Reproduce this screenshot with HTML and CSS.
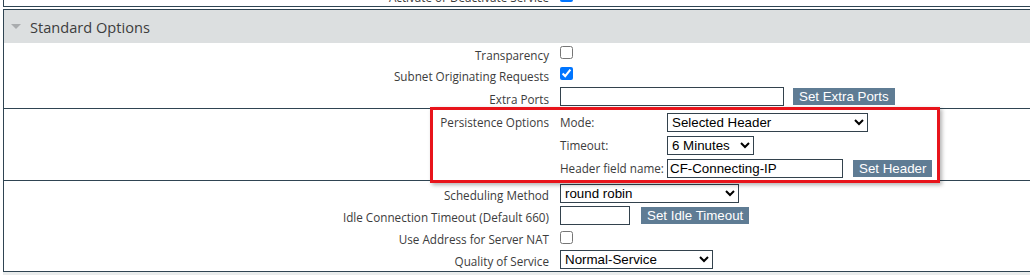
FILE: index.html
```html
<!DOCTYPE html>
<html>
<head>
<meta charset="utf-8">
<link rel="stylesheet" href="styles.css">
</head>
<body>
<div class="page">
  <div class="panel prev">
    <div class="rows rows-prev">
      <span class="lbl">Activate or Deactivate Service</span>
      <span class="ctl"><input type="checkbox" class="chk" checked></span>
    </div>
  </div>

  <div class="panel">
    <div class="panel-head"><span class="tri"></span><span class="head-text">Standard Options</span></div>

    <div class="group rows rows-g1">
      <span class="lbl">Transparency</span>
      <span class="ctl"><input type="checkbox" class="chk"></span>
      <span class="lbl">Subnet Originating Requests</span>
      <span class="ctl"><input type="checkbox" class="chk" checked></span>
      <span class="lbl">Extra Ports</span>
      <span class="ctl"><input type="text" class="txt txt-ports"><button class="btn">Set Extra Ports</button></span>
    </div>

    <div class="group persist">
      <span class="lbl lbl-top">Persistence Options</span>
      <div class="sub">
        <span class="sub-lbl">Mode:</span>
        <span class="ctl"><select class="sel sel-mode"><option>Selected Header</option></select></span>
        <span class="sub-lbl">Timeout:</span>
        <span class="ctl"><select class="sel sel-timeout"><option>6 Minutes</option></select></span>
        <span class="sub-lbl">Header field name:</span>
        <span class="ctl"><input type="text" class="txt txt-header" value="CF-Connecting-IP"><button class="btn btn-header">Set Header</button></span>
      </div>
      <div class="highlight"></div>
    </div>

    <div class="group rows rows-g3">
      <span class="lbl">Scheduling Method</span>
      <span class="ctl"><select class="sel sel-sched"><option>round robin</option></select></span>
      <span class="lbl">Idle Connection Timeout (Default 660)</span>
      <span class="ctl"><input type="text" class="txt txt-idle"><button class="btn btn-idle">Set Idle Timeout</button></span>
      <span class="lbl">Use Address for Server NAT</span>
      <span class="ctl"><input type="checkbox" class="chk"></span>
      <span class="lbl">Quality of Service</span>
      <span class="ctl"><select class="sel sel-qos"><option>Normal-Service</option></select></span>
    </div>
  </div>
  <div class="next-strip"></div>
</div>
</body>
</html>
```

FILE: styles.css
```css
html, body {
  margin: 0;
  padding: 0;
  overflow: hidden;
  background: #ffffff;
}

.page {
  padding-left: 3px;
  margin-top: -16px;
  font-family: "Open Sans", "Noto Sans", sans-serif;
  font-size: 11.7px;
  color: #3c3c3c;
}

.panel {
  border-left: 1px solid #2f4452;
  border-top: 1px solid #2f4452;
  border-bottom: 1px solid #2f4452;
  margin-bottom: 2px;
}

.panel.prev {
  border-top: none;
}

.rows {
  display: grid;
  grid-template-columns: 545px 1fr;
  column-gap: 11px;
  align-items: center;
}

.rows-prev {
  grid-template-rows: 22px;
}

.panel-head {
  height: 33px;
  background: #dcdfe0;
  display: flex;
  align-items: center;
  font-size: 14.6px;
  color: #3d3d3d;
}

.tri {
  width: 0;
  height: 0;
  margin-left: 7px;
  margin-right: 9px;
  border-left: 5px solid transparent;
  border-right: 5px solid transparent;
  border-top: 5px solid #a9acae;
}

.head-text {
  line-height: 20px;
}

.group {
  border-bottom: 1px solid #2f4452;
}

.group:last-child {
  border-bottom: none;
}

.rows-g1 {
  grid-template-rows: 19px 22px 24px;
}

.rows-g3 {
  grid-template-rows: repeat(4, 22px);
  padding: 1px 0 1px;
}

.lbl {
  text-align: right;
  white-space: nowrap;
  line-height: 16px;
  padding-top: 4px;
}

.rows-g1 .lbl {
  padding-top: 5px;
}

.ctl {
  display: flex;
  align-items: center;
}

.chk {
  margin: 0;
  width: 13px;
  height: 13px;
}

.txt {
  box-sizing: border-box;
  height: 19px;
  margin: 0;
  padding: 0 2px;
  border: 1px solid #33424d;
  border-radius: 0;
  font-family: "Liberation Sans", Arial, sans-serif;
  font-size: 13.33px;
  color: #000;
  outline: none;
}

.txt-ports { width: 224px; }
.txt-header { width: 176px; }
.txt-idle { width: 70px; }

.btn {
  box-sizing: border-box;
  height: 17px;
  margin: 0 0 0 9px;
  padding: 0 6px;
  border: none;
  border-radius: 0;
  background: #5f7c94;
  color: #ffffff;
  font-family: "Liberation Sans", Arial, sans-serif;
  font-size: 13.33px;
  line-height: 17px;
}

.btn-header { margin-left: 10px; }
.btn-idle { margin-left: 11px; }

.sel {
  box-sizing: border-box;
  height: 19px;
  margin: 0;
  padding: 0;
  border: 1px solid #33424d;
  border-radius: 0;
  background-color: #ffffff;
  color: #000;
  font-family: "Liberation Sans", Arial, sans-serif;
  font-size: 13.33px;
}

.sel-mode { width: 201px; }
.sel-timeout { width: 87px; }
.sel-sched { width: 179px; }
.sel-qos { width: 153px; }

.persist {
  position: relative;
  display: grid;
  grid-template-columns: 545px 1fr;
  column-gap: 11px;
  padding: 2px 0 3px;
  height: 66px;
}

.persist .lbl-top {
  padding-top: 3px;
}

.sub {
  display: grid;
  grid-template-columns: 107px 1fr;
  grid-template-rows: repeat(3, 22px);
  row-gap: 1px;
  align-items: center;
}

.sub-lbl {
  white-space: nowrap;
  line-height: 16px;
}

.highlight {
  position: absolute;
  left: 426px;
  top: -2px;
  width: 510px;
  height: 76px;
  box-sizing: border-box;
  border: 3px solid #e8141b;
  box-shadow: 2px 2px 4px rgba(0, 0, 0, 0.3);
  pointer-events: none;
}

.next-strip {
  height: 10px;
  background: #e9ecec;
  margin-top: -2px;
}
```
